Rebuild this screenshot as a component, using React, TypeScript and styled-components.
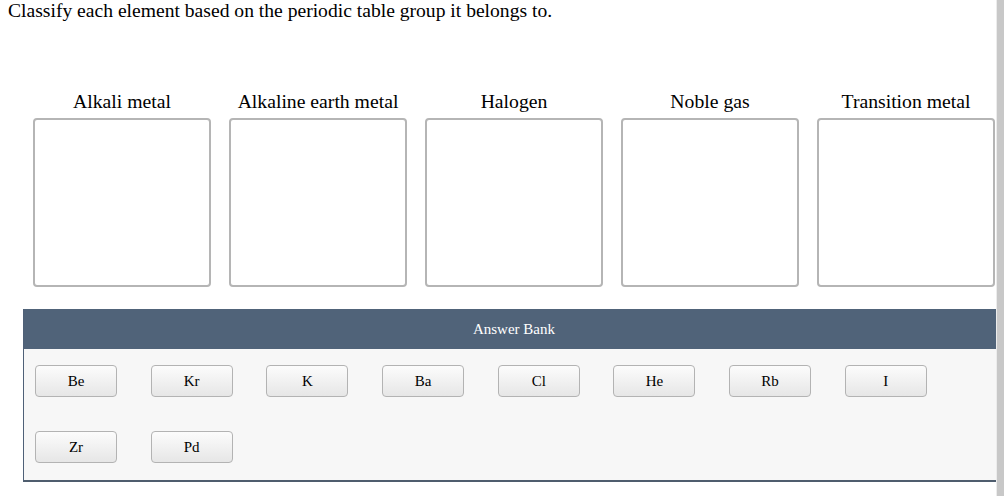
import React from "react";
import styled, { createGlobalStyle } from "styled-components";

const categories = [
  "Alkali metal",
  "Alkaline earth metal",
  "Halogen",
  "Noble gas",
  "Transition metal",
];

const elements = ["Be", "Kr", "K", "Ba", "Cl", "He", "Rb", "I", "Zr", "Pd"];

const App = (): React.ReactElement => {
  return (
    <>
      <GlobalStyle />
      <Page>
        <Main>
          <Question>
            Classify each element based on the periodic table group it belongs
            to.
          </Question>
          <Bins>
            {categories.map((c) => (
              <Bin key={c}>
                <BinLabel>{c}</BinLabel>
                <DropZone />
              </Bin>
            ))}
          </Bins>
          <Bank>
            <BankHeader>Answer Bank</BankHeader>
            <BankBody>
              {elements.map((e) => (
                <Chip key={e}>{e}</Chip>
              ))}
            </BankBody>
          </Bank>
        </Main>
        <ScrollStrip />
      </Page>
    </>
  );
};

export default App;

const GlobalStyle = createGlobalStyle`
  html, body {
    margin: 0;
    padding: 0;
    background: #fff;
  }
  body {
    font-family: "Liberation Serif", "Times New Roman", serif;
    color: #000;
  }
`;

const Page = styled.div`
  display: flex;
  width: 1004px;
  height: 496px;
  overflow: hidden;
`;

const Main = styled.div`
  flex: 1;
  min-width: 0;
`;

const ScrollStrip = styled.div`
  width: 7px;
  flex-shrink: 0;
  background: #c8c8c8;
  border-left: 1px solid #ececec;
`;

const Question = styled.div`
  font-size: 19.6px;
  line-height: 22px;
  padding: 0 0 0 8px;
  height: 78px;
  white-space: nowrap;
`;

const Bins = styled.div`
  display: grid;
  grid-template-columns: repeat(5, 178px);
  column-gap: 18px;
  padding-left: 33px;
`;

const Bin = styled.div`
  display: flex;
  flex-direction: column;
  align-items: center;
`;

const BinLabel = styled.div`
  font-size: 19.7px;
  line-height: 22px;
  height: 40px;
  padding-top: 12px;
  box-sizing: border-box;
  white-space: nowrap;
`;

const DropZone = styled.div`
  width: 178px;
  height: 169px;
  box-sizing: border-box;
  border: 2px solid #b5b5b5;
  border-radius: 4px;
  background: #fff;
`;

const Bank = styled.div`
  margin: 22px 0 0 23px;
  border-left: 1px solid #4f6077;
  border-bottom: 2px solid #4f5d6e;
  background: #f7f7f7;
`;

const BankHeader = styled.div`
  height: 40px;
  background: #506379;
  color: #fff;
  font-size: 15px;
  display: flex;
  align-items: center;
  justify-content: center;
  padding-left: 8px;
`;

const BankBody = styled.div`
  display: flex;
  flex-wrap: wrap;
  column-gap: 33.7px;
  row-gap: 34px;
  padding: 16px 0 17px 11px;
`;

const Chip = styled.div`
  width: 82px;
  height: 32px;
  box-sizing: border-box;
  border: 1px solid #b3b3b3;
  border-radius: 4px;
  background: linear-gradient(#fcfcfc, #e6e6e6);
  font-size: 15px;
  display: flex;
  align-items: center;
  justify-content: center;
`;
